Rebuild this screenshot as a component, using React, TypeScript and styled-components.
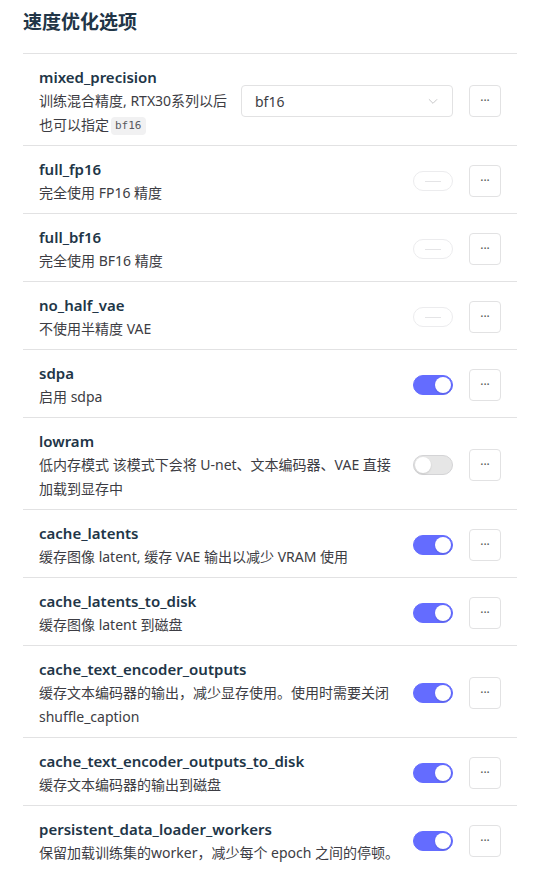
import React from "react";
import styled, { createGlobalStyle } from "styled-components";

const GlobalStyle = createGlobalStyle`
  body {
    margin: 0;
    background: #ffffff;
    font-family: "Noto Sans", "Noto Sans CJK SC", sans-serif;
    color: #3c3c43;
  }
`;

type SwitchState = "on" | "off" | "disabled";

const Page = styled.div`
  padding: 6px 27px 0 23px;
`;

const Heading = styled.h2`
  margin: 0;
  padding-bottom: 17px;
  font-size: 19px;
  line-height: 30px;
  font-weight: 700;
  color: #213547;
  font-family: "Noto Sans CJK SC", sans-serif;
`;

const List = styled.div`
  display: flex;
  flex-direction: column;
`;

const Row = styled.div`
  display: flex;
  align-items: center;
  gap: 12px;
  border-top: 1px solid #e2e2e3;
  padding: 11px 16px 8px;
`;

const Text = styled.div`
  flex: 1;
  min-width: 0;
`;

const Name = styled.div`
  font-size: 15px;
  line-height: 24px;
  font-weight: 600;
  color: #213547;
`;

const Desc = styled.div`
  font-size: 14px;
  line-height: 24px;
  color: #3c3c43;
`;

const Code = styled.code`
  display: inline-block;
  vertical-align: middle;
  font-family: "DejaVu Sans Mono", monospace;
  font-size: 11px;
  line-height: 18px;
  color: #5a5a60;
  background: #f1f1f2;
  border-radius: 4px;
  padding: 0 4px;
  margin-left: 2px;
`;

const Select = styled.div`
  width: 212px;
  height: 32px;
  box-sizing: border-box;
  border: 1px solid #e2e2e3;
  border-radius: 4px;
  display: flex;
  align-items: center;
  justify-content: space-between;
  padding: 0 12px 0 13px;
  font-size: 14px;
  color: #3c3c43;
`;

const Switch = styled.div<{ $state: SwitchState }>`
  position: relative;
  width: 40px;
  height: 20px;
  box-sizing: border-box;
  border-radius: 10px;
  display: flex;
  align-items: center;
  justify-content: center;
  background: ${({ $state }) =>
    $state === "on" ? "#646cff" : $state === "off" ? "#e6e6e6" : "#ffffff"};
  border: 1px solid
    ${({ $state }) =>
      $state === "on" ? "#646cff" : $state === "off" ? "#d4d4d6" : "#ececee"};
`;

const Knob = styled.span<{ $on: boolean }>`
  position: absolute;
  top: 1px;
  left: ${({ $on }) => ($on ? "21px" : "1px")};
  width: 16px;
  height: 16px;
  border-radius: 50%;
  background: #ffffff;
  box-shadow: 0 1px 2px rgba(0, 0, 0, 0.12);
`;

const Dash = styled.span`
  width: 16px;
  height: 1px;
  background: #e4e4e6;
`;

const MoreButton = styled.div`
  width: 32px;
  height: 32px;
  margin-left: 4px;
  box-sizing: border-box;
  border: 1px solid #e2e2e3;
  border-radius: 4px;
  display: flex;
  align-items: center;
  justify-content: center;
  font-size: 12px;
  line-height: 1;
  color: #555;
`;

type Option = {
  name: string;
  desc: React.ReactNode;
  control: SwitchState | "select";
};

const options: Option[] = [
  {
    name: "mixed_precision",
    desc: (
      <>
        训练混合精度, RTX30系列以后也可以指定<Code>bf16</Code>
      </>
    ),
    control: "select",
  },
  { name: "full_fp16", desc: "完全使用 FP16 精度", control: "disabled" },
  { name: "full_bf16", desc: "完全使用 BF16 精度", control: "disabled" },
  { name: "no_half_vae", desc: "不使用半精度 VAE", control: "disabled" },
  { name: "sdpa", desc: "启用 sdpa", control: "on" },
  {
    name: "lowram",
    desc: "低内存模式 该模式下会将 U-net、文本编码器、VAE 直接加载到显存中",
    control: "off",
  },
  {
    name: "cache_latents",
    desc: "缓存图像 latent, 缓存 VAE 输出以减少 VRAM 使用",
    control: "on",
  },
  { name: "cache_latents_to_disk", desc: "缓存图像 latent 到磁盘", control: "on" },
  {
    name: "cache_text_encoder_outputs",
    desc: "缓存文本编码器的输出，减少显存使用。使用时需要关闭 shuffle_caption",
    control: "on",
  },
  {
    name: "cache_text_encoder_outputs_to_disk",
    desc: "缓存文本编码器的输出到磁盘",
    control: "on",
  },
  {
    name: "persistent_data_loader_workers",
    desc: "保留加载训练集的worker，减少每个 epoch 之间的停顿。",
    control: "on",
  },
];

export default function App() {
  return (
    <>
      <GlobalStyle />
      <Page>
        <Heading>速度优化选项</Heading>
        <List>
          {options.map((o) => (
            <Row key={o.name}>
              <Text>
                <Name>{o.name}</Name>
                <Desc>{o.desc}</Desc>
              </Text>
              {o.control === "select" ? (
                <Select>
                  <span>bf16</span>
                  <svg width="14" height="14" viewBox="0 0 24 24" fill="none">
                    <path d="M5 9l7 7 7-7" stroke="#c2c2c4" strokeWidth="1.6" />
                  </svg>
                </Select>
              ) : (
                <Switch $state={o.control}>
                  {o.control === "disabled" ? <Dash /> : <Knob $on={o.control === "on"} />}
                </Switch>
              )}
              <MoreButton>···</MoreButton>
            </Row>
          ))}
        </List>
      </Page>
    </>
  );
}
